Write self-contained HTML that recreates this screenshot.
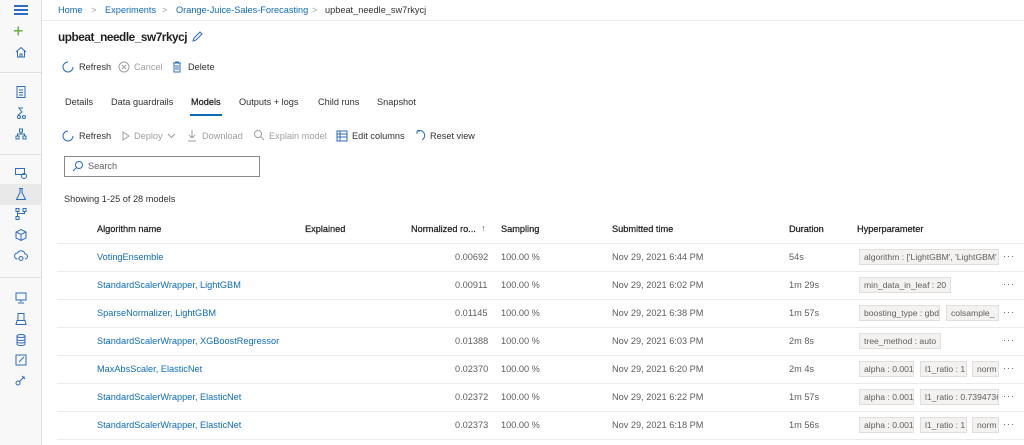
<!DOCTYPE html>
<html><head><style>
*{box-sizing:border-box;margin:0;padding:0}
body{width:1024px;height:445px;overflow:hidden;background:#fff;font-family:"Liberation Sans",sans-serif;font-size:9.2px;color:#323130;position:relative}
.a{position:absolute;white-space:nowrap}
.side{position:absolute;left:0;top:0;width:42px;height:445px;background:#f8f8f8;border-right:1px solid #e1dfdd}
.ic{position:absolute;left:14px;width:14px;height:14px;color:#2b6cc4}
.blue{color:#0f6cbd}
.gray{color:#a19f9d}
.hd{color:#201f1e;-webkit-text-stroke:0.25px #201f1e}
.sep{position:absolute;left:57px;right:0;height:1px;background:#edebe9}
.tag{position:absolute;height:16px;line-height:14px;background:#f3f2f1;border:1px solid #e1dfdd;padding:0 4px;color:#605e5c;white-space:nowrap;overflow:hidden;font-size:8.6px}
.dots{position:absolute;left:1003px;color:#605e5c;letter-spacing:1px}
.g{color:#605e5c}
</style></head><body>
<div class="side">
  <div class="a" style="left:14px;top:5px;width:14px;height:1.5px;background:#2b6cc4;box-shadow:0 4px 0 #2b6cc4,0 8px 0 #2b6cc4"></div>
  <div class="a" style="left:13px;top:22px;color:#5ba829;font-size:18px;line-height:18px">+</div>
  <svg class="ic" style="top:45px" viewBox="0 0 14 14" fill="none" stroke="#2b6cc4"><path d="M2 7L7 2.5L12 7M3.5 6v6h7V6M6 12V9h2v3"/></svg>
  <div class="a" style="left:0;top:72px;width:41px;height:1px;background:#e1dfdd"></div>
  <svg class="ic" style="top:85px" viewBox="0 0 14 14" fill="none" stroke="#2b6cc4"><rect x="3" y="1.5" width="8" height="11"/><path d="M5 5h4M5 7.5h4M5 10h4"/></svg>
  <svg class="ic" style="top:106px" viewBox="0 0 14 14" fill="none" stroke="#2b6cc4"><path d="M9 2H5l3 4-4 3"/><circle cx="5" cy="11" r="1.5"/><circle cx="10" cy="11" r="1.5"/></svg>
  <svg class="ic" style="top:127px" viewBox="0 0 14 14" fill="none" stroke="#2b6cc4"><rect x="5.5" y="2" width="3" height="3"/><rect x="2" y="9" width="3" height="3"/><rect x="9" y="9" width="3" height="3"/><path d="M7 5v2M3.5 9V7h7v2"/></svg>
  <div class="a" style="left:0;top:154px;width:41px;height:1px;background:#e1dfdd"></div>
  <svg class="ic" style="top:166px" viewBox="0 0 14 14" fill="none" stroke="#2b6cc4"><rect x="1.5" y="2.5" width="9" height="6"/><circle cx="10" cy="10" r="2.5"/></svg>
  <div class="a" style="left:0;top:184px;width:41px;height:21px;background:#e9e9e9"></div>
  <svg class="ic" style="top:187px" viewBox="0 0 14 14" fill="none" stroke="#2b6cc4"><path d="M5 1.5h4M6 1.5v4L2.5 12.5h9L8 5.5v-4"/></svg>
  <svg class="ic" style="top:207px" viewBox="0 0 14 14" fill="none" stroke="#2b6cc4"><rect x="2" y="1.5" width="3" height="3"/><rect x="9" y="1.5" width="3" height="3"/><rect x="2" y="9.5" width="3" height="3"/><path d="M3.5 4.5v5M10.5 4.5v2h-7"/></svg>
  <svg class="ic" style="top:228px" viewBox="0 0 14 14" fill="none" stroke="#2b6cc4"><path d="M7 1.5l5 2.5v6l-5 2.5-5-2.5V4zM2 4l5 2.5L12 4M7 6.5v6"/></svg>
  <svg class="ic" style="top:249px" viewBox="0 0 14 14" fill="none" stroke="#2b6cc4"><path d="M3.5 10a3 3 0 010-6 4 4 0 017.5 1 2.5 2.5 0 010 5"/><circle cx="7" cy="9.5" r="2"/></svg>
  <div class="a" style="left:0;top:277px;width:41px;height:1px;background:#e1dfdd"></div>
  <svg class="ic" style="top:291px" viewBox="0 0 14 14" fill="none" stroke="#2b6cc4"><rect x="2" y="2" width="10" height="7"/><path d="M7 9v2M4 12h6"/></svg>
  <svg class="ic" style="top:312px" viewBox="0 0 14 14" fill="none" stroke="#2b6cc4"><rect x="4" y="1.5" width="6" height="7"/><path d="M2 12.5h10l-1-4H3z"/></svg>
  <svg class="ic" style="top:333px" viewBox="0 0 14 14" fill="none" stroke="#2b6cc4"><ellipse cx="7" cy="3" rx="4" ry="1.5"/><path d="M3 3v8c0 2 8 2 8 0V3M3 6c0 2 8 2 8 0M3 8.5c0 2 8 2 8 0"/></svg>
  <svg class="ic" style="top:353px" viewBox="0 0 14 14" fill="none" stroke="#2b6cc4"><rect x="2" y="2" width="10" height="10"/><path d="M5 9l5-5"/></svg>
  <svg class="ic" style="top:373px" viewBox="0 0 14 14" fill="none" stroke="#2b6cc4"><circle cx="4" cy="10" r="2"/><path d="M5.5 8.5l5-5M8 3l3 3"/></svg>
</div>

<div class="a" style="left:42px;top:20px;width:982px;height:1px;background:#edebe9"></div>
<div class="a blue" style="left:58px;top:5px">Home</div>
<div class="a gray" style="left:91px;top:5px">&gt;</div>
<div class="a blue" style="left:105px;top:5px">Experiments</div>
<div class="a gray" style="left:162px;top:5px">&gt;</div>
<div class="a blue" style="left:176px;top:5px">Orange-Juice-Sales-Forecasting</div>
<div class="a gray" style="left:312px;top:5px">&gt;</div>
<div class="a" style="left:325px;top:5px">upbeat_needle_sw7rkycj</div>

<div class="a" style="left:58px;top:30px;font-size:11.8px;font-weight:bold;color:#201f1e;letter-spacing:-0.45px">upbeat_needle_sw7rkycj</div>
<svg class="a" style="left:191px;top:31px" width="12" height="12" viewBox="0 0 12 12" fill="none" stroke="#2b6cc4"><path d="M2 10l1-3 6-6 2 2-6 6zM2 10l3-1"/></svg>

<svg class="a" style="left:62px;top:61px" width="12" height="12" viewBox="0 0 12 12" fill="none" stroke="#2b6cc4"><path d="M6 1a5 5 0 105 5"/></svg>
<div class="a" style="left:79px;top:62px">Refresh</div>
<svg class="a" style="left:118px;top:61px" width="12" height="12" viewBox="0 0 12 12" fill="none" stroke="#a19f9d"><circle cx="6" cy="6" r="5"/><path d="M4 4l4 4M8 4l-4 4"/></svg>
<div class="a gray" style="left:134px;top:62px">Cancel</div>
<svg class="a" style="left:171px;top:61px" width="12" height="12" viewBox="0 0 12 12" fill="none" stroke="#2b6cc4"><path d="M2 2h8M4.5 2V1h3v1M3 2v9h6V2M5 4v5M7 4v5"/></svg>
<div class="a" style="left:188px;top:62px">Delete</div>

<div class="a" style="left:65px;top:97px">Details</div>
<div class="a" style="left:111px;top:97px">Data guardrails</div>
<div class="a hd" style="left:191px;top:97px">Models</div>
<div class="a" style="left:190px;top:114px;width:32px;height:2px;background:#0f6cbd"></div>
<div class="a" style="left:239px;top:97px">Outputs + logs</div>
<div class="a" style="left:318px;top:97px">Child runs</div>
<div class="a" style="left:377px;top:97px">Snapshot</div>

<svg class="a" style="left:62px;top:130px" width="12" height="12" viewBox="0 0 12 12" fill="none" stroke="#2b6cc4"><path d="M6 1a5 5 0 105 5"/></svg>
<div class="a" style="left:79px;top:131px">Refresh</div>
<svg class="a" style="left:121px;top:130px" width="10" height="12" viewBox="0 0 10 12" fill="none" stroke="#a19f9d"><path d="M2 2l6 4-6 4z"/></svg>
<div class="a gray" style="left:134px;top:131px">Deploy</div>
<svg class="a" style="left:167px;top:132px" width="9" height="8" viewBox="0 0 9 8" fill="none" stroke="#a19f9d"><path d="M1 2l3.5 3.5L8 2"/></svg>
<svg class="a" style="left:187px;top:129px" width="10" height="13" viewBox="0 0 10 13" fill="none" stroke="#a19f9d"><path d="M5 1v8M2 6l3 3 3-3M1 12h8"/></svg>
<div class="a gray" style="left:202px;top:131px">Download</div>
<svg class="a" style="left:253px;top:129px" width="12" height="12" viewBox="0 0 12 12" fill="none" stroke="#a19f9d"><circle cx="5" cy="5" r="3.5"/><path d="M7.5 7.5L11 11"/></svg>
<div class="a gray" style="left:269px;top:131px">Explain model</div>
<svg class="a" style="left:336px;top:130px" width="12" height="12" viewBox="0 0 12 12" fill="none" stroke="#2b6cc4"><rect x="1" y="1" width="10" height="10"/><path d="M1 4h10M1 7h10M4 1v10"/></svg>
<div class="a" style="left:352px;top:131px">Edit columns</div>
<svg class="a" style="left:414px;top:129px" width="12" height="12" viewBox="0 0 12 12" fill="none" stroke="#2b6cc4"><path d="M3 2a5 5 0 115 9M3 2v3M3 2h3"/></svg>
<div class="a" style="left:430px;top:131px">Reset view</div>

<div class="a" style="left:64px;top:156px;width:196px;height:21px;border:1px solid #8a8886"></div>
<svg class="a" style="left:72px;top:160px" width="12" height="12" viewBox="0 0 12 12" fill="none" stroke="#2b6cc4"><circle cx="7" cy="5" r="3.5"/><path d="M4.5 7.5L1 11"/></svg>
<div class="a g" style="left:88px;top:161px">Search</div>
<div class="a" style="left:64px;top:194px">Showing 1-25 of 28 models</div>

<div class="a hd" style="left:97px;top:224px">Algorithm name</div>
<div class="a hd" style="left:305px;top:224px">Explained</div>
<div class="a hd" style="left:411px;top:224px">Normalized ro...</div><div class="a g" style="left:481px;top:223px">↑</div>
<div class="a hd" style="left:501px;top:224px">Sampling</div>
<div class="a hd" style="left:612px;top:224px">Submitted time</div>
<div class="a hd" style="left:789px;top:224px">Duration</div>
<div class="a hd" style="left:857px;top:224px">Hyperparameter</div>
<div class="sep" style="top:243px"></div>

<div class="a blue" style="left:97px;top:252px">VotingEnsemble</div>
<div class="a g" style="left:455px;top:252px">0.00692</div><div class="a g" style="left:501px;top:252px">100.00 %</div><div class="a g" style="left:612px;top:252px">Nov 29, 2021 6:44 PM</div><div class="a g" style="left:789px;top:252px">54s</div>
<div class="tag" style="left:859px;top:249px;width:140px">algorithm : ['LightGBM', 'LightGBM'</div><div class="dots" style="top:251px">···</div>
<div class="sep" style="top:271px"></div>

<div class="a blue" style="left:97px;top:280px">StandardScalerWrapper, LightGBM</div>
<div class="a g" style="left:455px;top:280px">0.00911</div><div class="a g" style="left:501px;top:280px">100.00 %</div><div class="a g" style="left:612px;top:280px">Nov 29, 2021 6:02 PM</div><div class="a g" style="left:789px;top:280px">1m 29s</div>
<div class="tag" style="left:859px;top:277px">min_data_in_leaf : 20</div><div class="dots" style="top:279px">···</div>
<div class="sep" style="top:299px"></div>

<div class="a blue" style="left:97px;top:308px">SparseNormalizer, LightGBM</div>
<div class="a g" style="left:455px;top:308px">0.01145</div><div class="a g" style="left:501px;top:308px">100.00 %</div><div class="a g" style="left:612px;top:308px">Nov 29, 2021 6:38 PM</div><div class="a g" style="left:789px;top:308px">1m 57s</div>
<div class="tag" style="left:859px;top:305px;width:81px">boosting_type : gbdt</div><div class="tag" style="left:946px;top:305px;width:53px">colsample_</div><div class="dots" style="top:307px">···</div>
<div class="sep" style="top:327px"></div>

<div class="a blue" style="left:97px;top:336px">StandardScalerWrapper, XGBoostRegressor</div>
<div class="a g" style="left:455px;top:336px">0.01388</div><div class="a g" style="left:501px;top:336px">100.00 %</div><div class="a g" style="left:612px;top:336px">Nov 29, 2021 6:03 PM</div><div class="a g" style="left:789px;top:336px">2m 8s</div>
<div class="tag" style="left:859px;top:333px">tree_method : auto</div><div class="dots" style="top:335px">···</div>
<div class="sep" style="top:355px"></div>

<div class="a blue" style="left:97px;top:364px">MaxAbsScaler, ElasticNet</div>
<div class="a g" style="left:455px;top:364px">0.02370</div><div class="a g" style="left:501px;top:364px">100.00 %</div><div class="a g" style="left:612px;top:364px">Nov 29, 2021 6:20 PM</div><div class="a g" style="left:789px;top:364px">2m 4s</div>
<div class="tag" style="left:859px;top:361px;width:55px">alpha : 0.001</div><div class="tag" style="left:920px;top:361px;width:47px">l1_ratio : 1</div><div class="tag" style="left:972px;top:361px;width:27px">norm</div><div class="dots" style="top:363px">···</div>
<div class="sep" style="top:383px"></div>

<div class="a blue" style="left:97px;top:392px">StandardScalerWrapper, ElasticNet</div>
<div class="a g" style="left:455px;top:392px">0.02372</div><div class="a g" style="left:501px;top:392px">100.00 %</div><div class="a g" style="left:612px;top:392px">Nov 29, 2021 6:22 PM</div><div class="a g" style="left:789px;top:392px">1m 57s</div>
<div class="tag" style="left:859px;top:389px;width:55px">alpha : 0.001</div><div class="tag" style="left:920px;top:389px;width:79px">l1_ratio : 0.7394736</div><div class="dots" style="top:391px">···</div>
<div class="sep" style="top:411px"></div>

<div class="a blue" style="left:97px;top:420px">StandardScalerWrapper, ElasticNet</div>
<div class="a g" style="left:455px;top:420px">0.02373</div><div class="a g" style="left:501px;top:420px">100.00 %</div><div class="a g" style="left:612px;top:420px">Nov 29, 2021 6:18 PM</div><div class="a g" style="left:789px;top:420px">1m 56s</div>
<div class="tag" style="left:859px;top:417px;width:55px">alpha : 0.001</div><div class="tag" style="left:920px;top:417px;width:47px">l1_ratio : 1</div><div class="tag" style="left:972px;top:417px;width:27px">norm</div><div class="dots" style="top:419px">···</div>
<div class="sep" style="top:439px"></div>
</body></html>
